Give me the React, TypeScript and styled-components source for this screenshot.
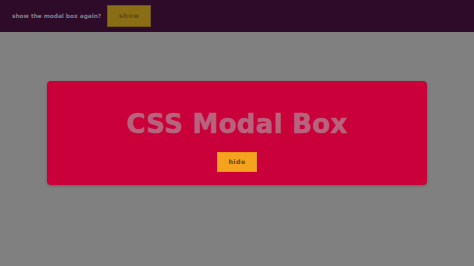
import styled, { createGlobalStyle } from 'styled-components'

const GlobalStyle = createGlobalStyle`
    html, body {
        margin: 0;
        padding: 0;
        background: #808080;
        font-family: "DejaVu Sans", "Open Sans", sans-serif;
    }
`

const Page = styled.div`
    width: 474px;
    height: 266px;
    display: flex;
    flex-direction: column;
    background: #808080;
`

const TopBar = styled.header`
    height: 32px;
    display: flex;
    align-items: center;
    gap: 6px;
    padding: 0 12px;
    box-sizing: border-box;
    background: #2e0b29;
`

const Prompt = styled.span`
    color: #8a7a88;
    font-size: 5.8px;
    font-weight: bold;
`

const Button = styled.button<{ $bg: string; $color: string; $border: string }>`
    font-family: inherit;
    font-size: 6.4px;
    font-weight: bold;
    letter-spacing: 0.4px;
    padding: 0;
    border: 1px solid ${(p) => p.$border};
    background: ${(p) => p.$bg};
    color: ${(p) => p.$color};
    display: flex;
    align-items: center;
    justify-content: center;
`

const ShowButton = styled(Button)`
    width: 44px;
    height: 22px;
`

const HideButton = styled(Button)`
    width: 40px;
    height: 20px;
`

const Stage = styled.main`
    flex: 1;
    display: flex;
    justify-content: center;
    padding-top: 49px;
`

const Modal = styled.section`
    width: 380px;
    height: 104px;
    box-sizing: border-box;
    border-radius: 4px;
    background: #c9003a;
    box-shadow: 0 1px 3px rgba(0, 0, 0, 0.25);
    display: flex;
    flex-direction: column;
    align-items: center;
    padding-top: 26px;
    gap: 11px;
`

const Title = styled.h1`
    margin: 0;
    font-size: 26px;
    line-height: 34px;
    font-weight: bold;
    letter-spacing: 0.3px;
    color: #b7637e;
    -webkit-text-stroke: 0.6px #b7637e;
`

export default function App() {
    return (
        <>
            <GlobalStyle />
            <Page>
                <TopBar>
                    <Prompt>show the modal box again?</Prompt>
                    <ShowButton $bg="#8a6e16" $color="#5e4a14" $border="#6e5612">
                        show
                    </ShowButton>
                </TopBar>
                <Stage>
                    <Modal>
                        <Title>CSS Modal Box</Title>
                        <HideButton $bg="#f5a21e" $color="#6e4414" $border="#e8961a">
                            hide
                        </HideButton>
                    </Modal>
                </Stage>
            </Page>
        </>
    )
}
